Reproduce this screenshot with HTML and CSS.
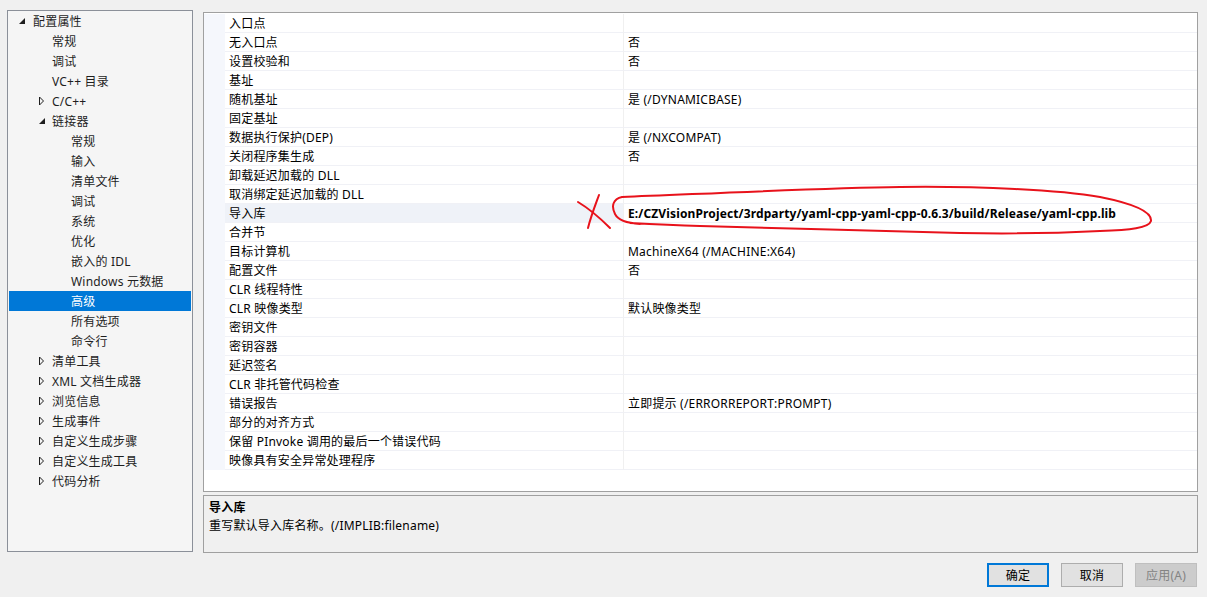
FILE: index.html
```html
<!DOCTYPE html>
<html lang="zh">
<head>
<meta charset="utf-8">
<title>属性页</title>
<link rel="stylesheet" href="styles.css">
</head>
<body>
<div class="dialog">
  <div class="main">
    <div class="tree">
      <div class="node l0"><span class="tw"><svg width="8" height="8" viewBox="0 0 8 8"><path d="M7 1V7H1Z" fill="#1e1e1e"/></svg></span>配置属性</div>
      <div class="node l1"><span class="tw"></span>常规</div>
      <div class="node l1"><span class="tw"></span>调试</div>
      <div class="node l1"><span class="tw"></span>VC++ 目录</div>
      <div class="node l1"><span class="tw"><svg width="8" height="10" viewBox="0 0 8 10"><path d="M1.5 1V9L5.5 5Z" fill="none" stroke="#1e1e1e"/></svg></span>C/C++</div>
      <div class="node l1"><span class="tw"><svg width="8" height="8" viewBox="0 0 8 8"><path d="M7 1V7H1Z" fill="#1e1e1e"/></svg></span>链接器</div>
      <div class="node l2"><span class="tw"></span>常规</div>
      <div class="node l2"><span class="tw"></span>输入</div>
      <div class="node l2"><span class="tw"></span>清单文件</div>
      <div class="node l2"><span class="tw"></span>调试</div>
      <div class="node l2"><span class="tw"></span>系统</div>
      <div class="node l2"><span class="tw"></span>优化</div>
      <div class="node l2"><span class="tw"></span>嵌入的 IDL</div>
      <div class="node l2"><span class="tw"></span>Windows 元数据</div>
      <div class="node l2 sel"><span class="tw"></span>高级</div>
      <div class="node l2"><span class="tw"></span>所有选项</div>
      <div class="node l2"><span class="tw"></span>命令行</div>
      <div class="node l1"><span class="tw"><svg width="8" height="10" viewBox="0 0 8 10"><path d="M1.5 1V9L5.5 5Z" fill="none" stroke="#1e1e1e"/></svg></span>清单工具</div>
      <div class="node l1"><span class="tw"><svg width="8" height="10" viewBox="0 0 8 10"><path d="M1.5 1V9L5.5 5Z" fill="none" stroke="#1e1e1e"/></svg></span>XML 文档生成器</div>
      <div class="node l1"><span class="tw"><svg width="8" height="10" viewBox="0 0 8 10"><path d="M1.5 1V9L5.5 5Z" fill="none" stroke="#1e1e1e"/></svg></span>浏览信息</div>
      <div class="node l1"><span class="tw"><svg width="8" height="10" viewBox="0 0 8 10"><path d="M1.5 1V9L5.5 5Z" fill="none" stroke="#1e1e1e"/></svg></span>生成事件</div>
      <div class="node l1"><span class="tw"><svg width="8" height="10" viewBox="0 0 8 10"><path d="M1.5 1V9L5.5 5Z" fill="none" stroke="#1e1e1e"/></svg></span>自定义生成步骤</div>
      <div class="node l1"><span class="tw"><svg width="8" height="10" viewBox="0 0 8 10"><path d="M1.5 1V9L5.5 5Z" fill="none" stroke="#1e1e1e"/></svg></span>自定义生成工具</div>
      <div class="node l1"><span class="tw"><svg width="8" height="10" viewBox="0 0 8 10"><path d="M1.5 1V9L5.5 5Z" fill="none" stroke="#1e1e1e"/></svg></span>代码分析</div>
    </div>
    <div class="right">
      <div class="grid">
        <div class="row"><div class="gut"></div><div class="name">入口点</div><div class="val"></div></div>
        <div class="row"><div class="gut"></div><div class="name">无入口点</div><div class="val">否</div></div>
        <div class="row"><div class="gut"></div><div class="name">设置校验和</div><div class="val">否</div></div>
        <div class="row"><div class="gut"></div><div class="name">基址</div><div class="val"></div></div>
        <div class="row"><div class="gut"></div><div class="name">随机基址</div><div class="val">是 (/DYNAMICBASE)</div></div>
        <div class="row"><div class="gut"></div><div class="name">固定基址</div><div class="val"></div></div>
        <div class="row"><div class="gut"></div><div class="name">数据执行保护(DEP)</div><div class="val">是 (/NXCOMPAT)</div></div>
        <div class="row"><div class="gut"></div><div class="name">关闭程序集生成</div><div class="val">否</div></div>
        <div class="row"><div class="gut"></div><div class="name">卸载延迟加载的 DLL</div><div class="val"></div></div>
        <div class="row"><div class="gut"></div><div class="name">取消绑定延迟加载的 DLL</div><div class="val"></div></div>
        <div class="row cur"><div class="gut"></div><div class="name">导入库</div><div class="val bold">E:/CZVisionProject/3rdparty/yaml-cpp-yaml-cpp-0.6.3/build/Release/yaml-cpp.lib</div></div>
        <div class="row"><div class="gut"></div><div class="name">合并节</div><div class="val"></div></div>
        <div class="row"><div class="gut"></div><div class="name">目标计算机</div><div class="val">MachineX64 (/MACHINE:X64)</div></div>
        <div class="row"><div class="gut"></div><div class="name">配置文件</div><div class="val">否</div></div>
        <div class="row"><div class="gut"></div><div class="name">CLR 线程特性</div><div class="val"></div></div>
        <div class="row"><div class="gut"></div><div class="name">CLR 映像类型</div><div class="val">默认映像类型</div></div>
        <div class="row"><div class="gut"></div><div class="name">密钥文件</div><div class="val"></div></div>
        <div class="row"><div class="gut"></div><div class="name">密钥容器</div><div class="val"></div></div>
        <div class="row"><div class="gut"></div><div class="name">延迟签名</div><div class="val"></div></div>
        <div class="row"><div class="gut"></div><div class="name">CLR 非托管代码检查</div><div class="val"></div></div>
        <div class="row"><div class="gut"></div><div class="name">错误报告</div><div class="val">立即提示 (/ERRORREPORT:PROMPT)</div></div>
        <div class="row"><div class="gut"></div><div class="name">部分的对齐方式</div><div class="val"></div></div>
        <div class="row"><div class="gut"></div><div class="name">保留 PInvoke 调用的最后一个错误代码</div><div class="val"></div></div>
        <div class="row"><div class="gut"></div><div class="name">映像具有安全异常处理程序</div><div class="val"></div></div>
      </div>
      <div class="desc">
        <div class="desc-title">导入库</div>
        <div class="desc-text">重写默认导入库名称。(/IMPLIB:filename)</div>
      </div>
    </div>
  </div>
  <div class="buttons">
    <button class="btn default">确定</button>
    <button class="btn">取消</button>
    <button class="btn disabled">应用(A)</button>
  </div>
</div>
<svg class="ink" width="1207" height="597" viewBox="0 0 1207 597">
  <path d="M578 202 C588 208 600 218 610 228" fill="none" stroke="#e8121b" stroke-width="2" stroke-linecap="round"/>
  <path d="M599 195 C595 206 591 216 588 228" fill="none" stroke="#e8121b" stroke-width="2" stroke-linecap="round"/>
  <path d="M640 224 C625 223 618 220 615 214 C611 206 613 199 622 197 C700 194 820 188 900 187 C980 186 1060 190 1100 197 C1135 204 1152 212 1151 221 C1149 228 1130 230 1100 231 C1060 233 1010 234 960 233 C880 231 780 228 700 226 C670 225 650 224 630 223" fill="none" stroke="#e8121b" stroke-width="2" stroke-linecap="round"/>
</svg>
</body>
</html>
```
FILE: styles.css
```css
* { box-sizing: border-box; }
html, body { margin: 0; padding: 0; }
body {
  width: 1207px;
  height: 597px;
  background: #f0f0f0;
  font-family: "Segoe UI", "Noto Sans", "Noto Sans CJK SC", sans-serif;
  font-size: 12px;
  letter-spacing: 0.2px;
  color: #000;
  position: relative;
  overflow: hidden;
}
.dialog { width: 1207px; height: 597px; }
.main {
  display: flex;
  padding: 10px 9px 0 7px;
  gap: 10px;
  align-items: flex-start;
}
.tree {
  width: 186px;
  height: 542px;
  border: 1px solid #8b9099;
  background: #f5f5f5;
  padding: 0 1px;
}
.node {
  height: 20px;
  padding-top: 2px;
  line-height: 18px;
  display: flex;
  align-items: flex-start;
  color: #1e1e1e;
  white-space: nowrap;
}
.node .tw {
  width: 15px;
  height: 20px;
  margin-top: -2px;
  display: flex;
  align-items: center;
  justify-content: flex-start;
  flex: none;
}
.l0 { padding-left: 9px; }
.l1 { padding-left: 28px; }
.l1 .tw { padding-left: 1px; }
.l2 { padding-left: 47px; }
.node.sel { background: #0078d7; color: #fff; }
.l0 .tw { padding-left: 0; }
.l0 .tw svg, .l1 .tw svg { display: block; }

.right {
  width: 995px;
  margin-top: 2px;
  display: flex;
  flex-direction: column;
  gap: 3px;
}
.grid {
  height: 480px;
  border: 1px solid #a0a0a0;
  background: #fff;
  padding-top: 1px;
}
.row {
  display: flex;
  height: 19px;
  line-height: 20px;
}
.gut {
  width: 21px;
  flex: none;
  background: #f5f7fc;
}
.name {
  width: 399px;
  flex: none;
  padding-left: 4px;
  border-right: 1px solid #f0f0f0;
  border-bottom: 1px solid #f0f1f6;
  white-space: nowrap;
}
.val {
  flex: 1;
  padding-left: 4px;
  border-bottom: 1px solid #f0f1f6;
  white-space: nowrap;
}
.row.cur .name { background: #eff2f8; }
.bold { font-weight: bold; letter-spacing: 0.13px; }

.desc {
  height: 58px;
  border: 1px solid #a0a0a0;
  background: #f0f0f0;
  padding: 3px 5px 0;
  line-height: 18px;
}
.desc-title { font-weight: bold; }

.buttons {
  display: flex;
  justify-content: flex-end;
  gap: 12px;
  padding-right: 10px;
  margin-top: 10px;
}
.btn {
  width: 62px;
  height: 24px;
  background: #e1e1e1;
  border: 1px solid #adadad;
  font-family: inherit;
  font-size: 12px;
  letter-spacing: 0.2px;
  color: #000;
  padding: 0;
  margin: 0;
}
.btn.default { border: 2px solid #0078d7; }
.btn.disabled { background: #cccccc; border-color: #bfbfbf; color: #838383; }

.ink {
  position: absolute;
  left: 0;
  top: 0;
  pointer-events: none;
}
```
